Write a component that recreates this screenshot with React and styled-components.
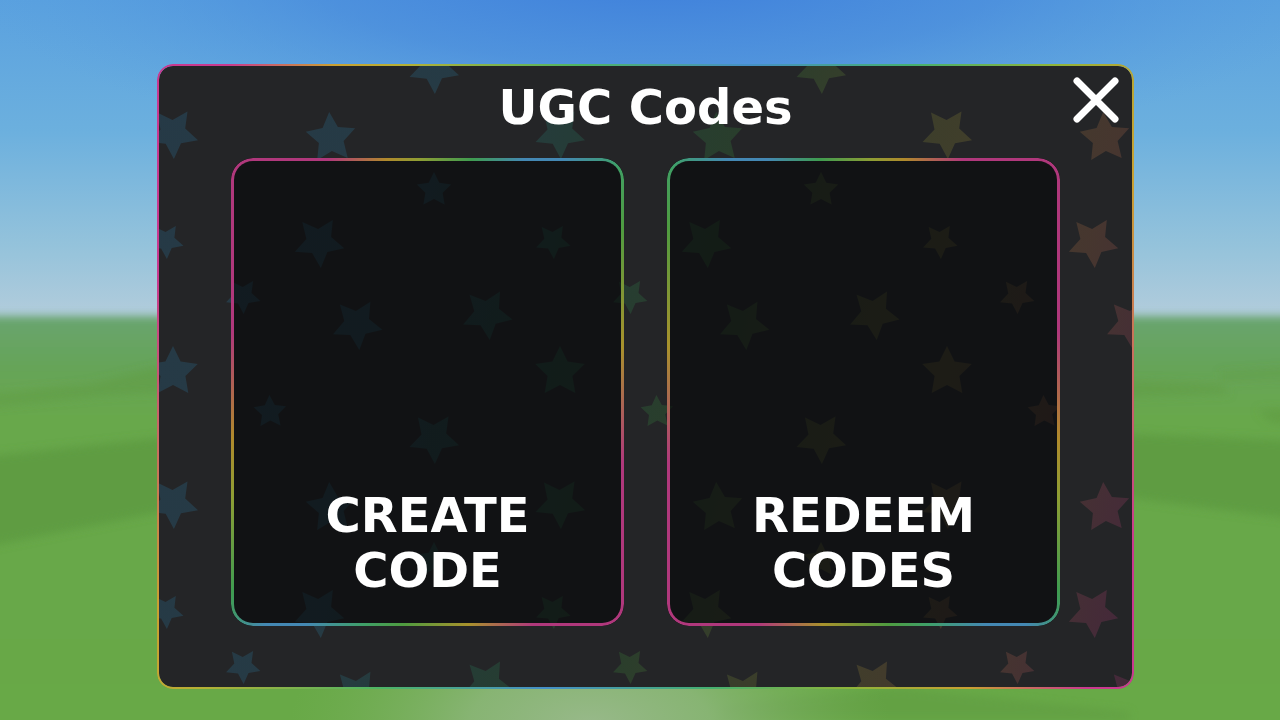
import React from 'react';
import styled, { createGlobalStyle } from 'styled-components';

const GlobalStyle = createGlobalStyle`
    *,
    *::before,
    *::after {
        box-sizing: border-box;
    }

    body {
        margin: 0;
        font-family: 'DejaVu Sans', 'Liberation Sans', sans-serif;
        color: #ffffff;
    }
`;

const Page = styled.main`
    position: relative;
    min-height: 100vh;
    padding: 64px 146px 31px 157px;
    overflow: hidden;
    background: #69a94a;
`;

const SceneArt = styled.svg`
    position: absolute;
    inset: 0;
    width: 100%;
    height: 100%;
`;

// rainbow outline that leaves the inside see-through
const RainbowFrame = styled.div`
    position: absolute;
    inset: 0;
    padding: ${(props) => props.$width}px;
    border-radius: inherit;
    background: linear-gradient(${(props) => props.$angle}deg, ${(props) => props.$stops});
    mask: linear-gradient(#000 0 0) content-box exclude, linear-gradient(#000 0 0);
    pointer-events: none;
`;

const Panel = styled.section`
    position: relative;
    padding: 2px;
    border-radius: 16px;
    background: #242527 content-box;
`;

const StarArt = styled.svg`
    position: absolute;
    inset: 0;
    width: 100%;
    height: 100%;
    border-radius: inherit;
`;

const Header = styled.header`
    position: relative;
    display: grid;
    grid-template-columns: 1fr auto 1fr;
    align-items: start;
    height: 92px;
    padding: 11px 12px 0;
`;

const Title = styled.h1`
    grid-column: 2;
    margin: 0;
    font-size: 48px;
    font-weight: 700;
    line-height: 60px;
`;

const CloseButton = styled.button`
    justify-self: end;
    display: flex;
    padding: 0;
    border: 0;
    background: none;
    cursor: pointer;
`;

const CardRow = styled.div`
    position: relative;
    display: grid;
    grid-template-columns: 1fr 1fr;
    gap: 43px;
    padding: 0 72px 61px;
`;

const Card = styled.button`
    position: relative;
    display: flex;
    flex-direction: column;
    justify-content: flex-end;
    align-items: center;
    min-height: 468px;
    padding: 0 24px 28px;
    border: 0;
    border-radius: 22px;
    background: rgba(5, 6, 8, 0.6);
    color: inherit;
    font-family: inherit;
    font-size: 48px;
    font-weight: 700;
    line-height: 55px;
    cursor: pointer;
`;

const PANEL_STOPS = '#c9398f 0%, #c9398f 6%, #c9a032 15%, #b5b035 21%, #4db564 36%, #4590c8 50%, #45b070 64%, #8fb43a 76%, #c9a032 86%, #c9398f 96%';
const CARD_STOPS = '#b0387c 0%, #b0387c 15%, #b08a2c 24%, #8f9e34 29%, #3f9c50 37%, #4488b4 45%, #4488b4 51%, #3fa068 60%, #4f9c40 66%, #a8922c 76%, #b0387c 86%';

// one tile of the star pattern: x, y, outer radius, rotation
const STARS = [
    [173, 133, 26, 178],
    [331, 138, 26, -4],
    [434, 68, 26, 178],
    [166, 241, 18, 177],
    [319, 242, 26, 176],
    [434, 190, 18, 0],
    [243, 296, 18, 178],
    [357, 324, 26, 175],
    [487, 314, 26, 30],
    [173, 372, 26, 0],
    [270, 412, 17, -2],
];
const TILE_WIDTH = 387;
const TILE_HEIGHT = 370;

function starPath([cx, cy, radius, rotation], dx, dy) {
    const points = [];
    for (let i = 0; i < 10; i++) {
        const r = i % 2 === 0 ? radius : radius * 0.5;
        const angle = ((i * 36 + rotation - 90) * Math.PI) / 180;
        points.push(`${(cx + dx + r * Math.cos(angle)).toFixed(1)} ${(cy + dy + r * Math.sin(angle)).toFixed(1)}`);
    }
    return `M${points.join('L')}Z`;
}

function Stars() {
    const paths = [];
    for (let row = 0; row < 2; row++) {
        for (let col = 0; col < 3; col++) {
            STARS.forEach((star) => paths.push(starPath(star, col * TILE_WIDTH, row * TILE_HEIGHT)));
        }
    }

    return (
        <StarArt viewBox="157 64 977 625" preserveAspectRatio="xMidYMid slice" aria-hidden="true">
            <defs>
                <linearGradient id="stars" gradientUnits="userSpaceOnUse" x1="158" y1="64" x2="1190" y2="322">
                    <stop offset="0" stopColor="#2d92cc" />
                    <stop offset="0.27" stopColor="#2d96c4" />
                    <stop offset="0.42" stopColor="#28a070" />
                    <stop offset="0.55" stopColor="#3fa840" />
                    <stop offset="0.66" stopColor="#90a83a" />
                    <stop offset="0.76" stopColor="#b8a83a" />
                    <stop offset="0.89" stopColor="#d88050" />
                    <stop offset="1" stopColor="#d03c88" />
                </linearGradient>
            </defs>
            <path d={paths.join('')} fill="url(#stars)" opacity="0.19" />
        </StarArt>
    );
}

function Scene() {
    return (
        <SceneArt viewBox="0 0 1280 720" preserveAspectRatio="none" aria-hidden="true">
            <defs>
                <linearGradient id="sky" x1="0" y1="0" x2="0" y2="1">
                    <stop offset="0" stopColor="#5aa1df" />
                    <stop offset="0.4" stopColor="#6cb0de" />
                    <stop offset="0.75" stopColor="#95c3db" />
                    <stop offset="1" stopColor="#b8cedc" />
                </linearGradient>
                <radialGradient id="zenith" gradientUnits="userSpaceOnUse" cx="0" cy="0" r="1" gradientTransform="translate(660 -30) scale(700 190)">
                    <stop offset="0" stopColor="#3d7edb" />
                    <stop offset="0.5" stopColor="#4688dc" stopOpacity="0.65" />
                    <stop offset="1" stopColor="#569de0" stopOpacity="0" />
                </radialGradient>
                <linearGradient id="ground" x1="0" y1="0" x2="0" y2="1">
                    <stop offset="0" stopColor="#68a470" />
                    <stop offset="0.1" stopColor="#66a45a" />
                    <stop offset="0.22" stopColor="#68a84c" />
                    <stop offset="1" stopColor="#68a945" />
                </linearGradient>
                <radialGradient id="glow" gradientUnits="userSpaceOnUse" cx="0" cy="0" r="1" gradientTransform="translate(590 725) scale(300 150)">
                    <stop offset="0" stopColor="#98b98a" />
                    <stop offset="0.4" stopColor="#8fb77e" stopOpacity="0.8" />
                    <stop offset="1" stopColor="#78b05a" stopOpacity="0" />
                </radialGradient>
                <filter id="soft" x="-5%" y="-50%" width="110%" height="200%">
                    <feGaussianBlur stdDeviation="4" />
                </filter>
            </defs>
            <rect width="1280" height="330" fill="url(#sky)" />
            <rect width="1280" height="330" fill="url(#zenith)" />
            <rect x="-40" y="316" width="1360" height="460" fill="url(#ground)" filter="url(#soft)" />
            <g fill="#5f9c42" filter="url(#soft)">
                <path d="M-20 457L160 438L640 420L1130 434L1300 441V520L1130 498L640 480L160 512L-20 548Z" />
                <path d="M-20 396L90 384L170 364V392L100 396L-20 408Z" opacity="0.6" />
                <path d="M1120 380L1220 384L1230 394L1120 398Z" opacity="0.6" />
                <path d="M1258 410L1300 408V426L1270 422Z" opacity="0.7" />
                <path d="M1220 372L1300 366V378L1220 382Z" opacity="0.3" />
            </g>
            <path d="M720 704L900 688L1130 712V720H720Z" fill="#609c42" opacity="0.6" filter="url(#soft)" />
            <rect y="560" width="1280" height="160" fill="url(#glow)" />
        </SceneArt>
    );
}

function MenuCard(props) {
    const { angle, lines } = props;

    return (
        <Card type="button">
            <RainbowFrame $width={3} $angle={angle} $stops={CARD_STOPS} />
            {lines.map((line) => (
                <span key={line}>{line}</span>
            ))}
        </Card>
    );
}

function App() {
    return (
        <Page>
            <GlobalStyle />
            <Scene />
            <Panel>
                <Stars />
                <Header>
                    <Title>UGC Codes</Title>
                    <CloseButton type="button" aria-label="Close">
                        <svg width="48" height="48" viewBox="0 0 48 48" stroke="#ffffff" strokeWidth="7" strokeLinecap="round">
                            <path d="M5 4L43 42M43 4L5 42" />
                        </svg>
                    </CloseButton>
                </Header>
                <CardRow>
                    <MenuCard angle={119} lines={['CREATE', 'CODE']} />
                    <MenuCard angle={241} lines={['REDEEM', 'CODES']} />
                </CardRow>
                <RainbowFrame $width={2} $angle={108} $stops={PANEL_STOPS} />
            </Panel>
        </Page>
    );
}

export default App;
